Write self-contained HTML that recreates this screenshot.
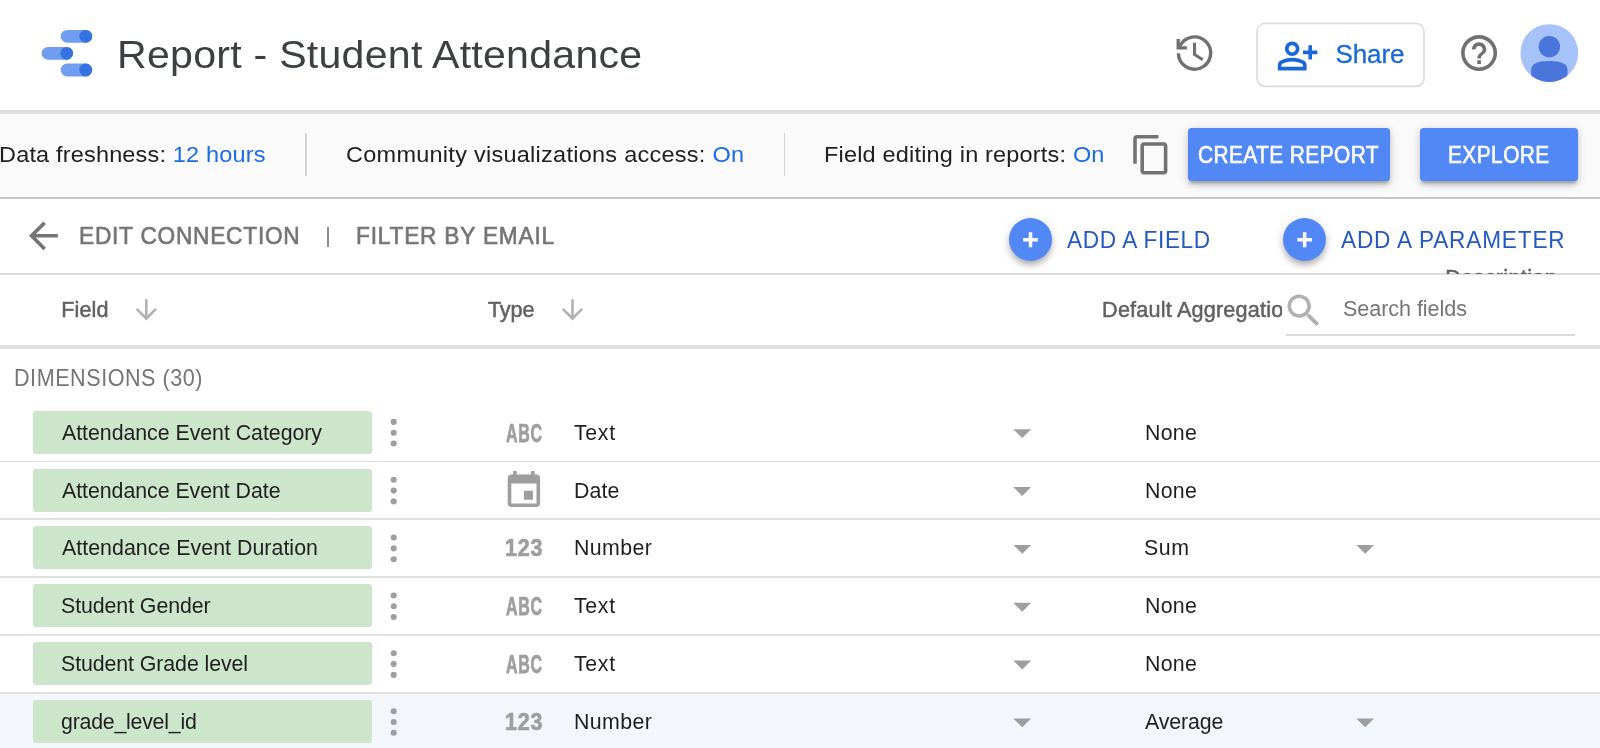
<!DOCTYPE html>
<html lang="en">
<head>
<meta charset="utf-8">
<title>Report - Student Attendance</title>
<style>
html,body{margin:0;padding:0;background:#fff}
body{width:1600px;height:748px;position:relative;overflow:hidden;font-family:"Liberation Sans",sans-serif}
.t{position:absolute;white-space:nowrap;line-height:1}
.t .b{color:#1a6ce5}
.a{position:absolute}
svg{position:absolute;left:0;top:0;overflow:visible}
.btn{position:absolute;background:#5188f6;border-radius:3.5px;box-shadow:0 4.5px 3px -2.5px rgba(0,0,0,.2),0 3.5px 5px rgba(0,0,0,.13),0 2.5px 11px rgba(0,0,0,.15)}
.fab{position:absolute;width:43.2px;height:43.2px;border-radius:50%;background:#5188f6;box-shadow:0 4.5px 6px -1.6px rgba(0,0,0,.2),0 4px 9px rgba(0,0,0,.14),0 1.6px 13px rgba(0,0,0,.10)}
.chip{position:absolute;left:32.6px;width:339.6px;height:43px;border-radius:3px;background:#cce5cb}
.sep{position:absolute;left:0;width:1600px;height:1.8px;background:#e0e0e0}
.ti{position:absolute;white-space:nowrap;line-height:1;font-weight:700;color:#9e9e9e;transform-origin:0 0;-webkit-text-stroke:.6px #9e9e9e}
</style>
</head>
<body>
<div id="root" style="position:absolute;left:0;top:0;width:1600px;height:748px;will-change:transform">
<!-- header -->
<div class="a" style="left:0;top:110.3px;width:1600px;height:1.8px;background:#dadce0"></div>
<div class="a" style="left:0;top:112.1px;width:1600px;height:1.8px;background:#e0e0e0"></div>
<!-- toolbar -->
<div class="a" style="left:0;top:113.9px;width:1600px;height:83.1px;background:#fafafa"></div>
<div class="a" style="left:0;top:197px;width:1600px;height:1.7px;background:#c6c6c6"></div>
<div class="a" style="left:305.2px;top:133px;width:1.6px;height:42.6px;background:#d4d4d4"></div>
<div class="a" style="left:783.8px;top:133px;width:1.6px;height:42.6px;background:#d4d4d4"></div>
<div class="btn" style="left:1187.7px;top:128.3px;width:202.7px;height:52.9px"></div>
<div class="btn" style="left:1419.6px;top:128.2px;width:158.5px;height:53px"></div>
<!-- sub header -->
<div class="a" style="left:327.3px;top:227px;width:1.5px;height:19.6px;background:#8c8c8c"></div>
<div class="fab" style="left:1008.7px;top:217.8px"></div>
<div class="fab" style="left:1282.8px;top:217.8px"></div>
<div class="a" style="left:0;top:273px;width:1600px;height:1.6px;background:#dcdcdc"></div>
<!-- column header -->
<div class="a" style="left:0;top:274.6px;width:1600px;height:70.5px;background:#fff"></div>
<div class="a" style="left:0;top:345.1px;width:1600px;height:3.6px;background:#e0e0e0"></div>
<div class="a" style="left:1430px;top:260px;width:160px;height:14.4px;overflow:hidden"><div class="t" style="left:15.2px;top:7.4px;font-size:21.6px;letter-spacing:.35px;color:#616161;-webkit-text-stroke:.5px #616161">Description</div></div>
<div class="a" style="left:1090px;top:290px;width:192px;height:40px;overflow:hidden"><div class="t" id="defagg" style="left:12.1px;top:9px;font-size:21.6px;letter-spacing:.2px;color:#616161;-webkit-text-stroke:.5px #616161">Default Aggregation</div></div>
<div class="a" style="left:1286px;top:334.2px;width:288.6px;height:1.6px;background:#d9d9d9"></div>
<!-- rows -->
<div class="a" style="left:0;top:693.7px;width:1600px;height:55px;background:#f3f6fa"></div>
<div class="chip" style="top:410.70px"></div>
<div class="sep" style="top:460.50px"></div>
<div class="ti" style="left:505.7px;top:420.50px;font-size:20px;transform:scale(0.8,1.25);letter-spacing:0.8px">ABC</div>
<div class="chip" style="top:468.55px"></div>
<div class="sep" style="top:518.35px"></div>
<div class="chip" style="top:526.40px"></div>
<div class="sep" style="top:576.20px"></div>
<div class="ti" style="left:504.6px;top:536.00px;font-size:20px;transform:scale(1.07,1.17);letter-spacing:0.8px">123</div>
<div class="chip" style="top:584.25px"></div>
<div class="sep" style="top:634.05px"></div>
<div class="ti" style="left:505.7px;top:594.05px;font-size:20px;transform:scale(0.8,1.25);letter-spacing:0.8px">ABC</div>
<div class="chip" style="top:642.10px"></div>
<div class="sep" style="top:691.90px"></div>
<div class="ti" style="left:505.7px;top:651.90px;font-size:20px;transform:scale(0.8,1.25);letter-spacing:0.8px">ABC</div>
<div class="chip" style="top:699.95px"></div>
<div class="ti" style="left:504.6px;top:709.55px;font-size:20px;transform:scale(1.07,1.17);letter-spacing:0.8px">123</div>
<svg width="1600" height="748" viewBox="0 0 1600 748">
<!-- logo -->
<g>
<rect x="60.7" y="29.9" width="31.5" height="12.8" rx="6.4" fill="#709df0"/><circle cx="85.8" cy="36.3" r="6.4" fill="#3572e2"/>
<rect x="41.7" y="47" width="31.3" height="12.7" rx="6.35" fill="#709df0"/><circle cx="66.65" cy="53.35" r="6.35" fill="#3572e2"/>
<rect x="60.7" y="63.6" width="31.5" height="12.9" rx="6.45" fill="#709df0"/><circle cx="85.75" cy="70.05" r="6.45" fill="#3572e2"/>
</g>
<!-- history -->
<g fill="none" stroke="#707070" stroke-width="3.4">
<path d="M1178.40 53.25A16.15 16.15 0 1 0 1179.91 46.22"/>
<path d="M1178.2 39.1V47.85H1186.9" stroke-width="3.3"/>
<path d="M1194.5 42.8V54.4L1202.7 59.8" stroke-width="3"/>
</g>
<!-- share button -->
<rect x="1257" y="23.4" width="167" height="62.9" rx="8" fill="#fff" stroke="#dadce0" stroke-width="1.7"/>
<g transform="translate(1276 34.4) scale(1.8)" fill="#1a68d8"><path d="M20 9V6h-2v3h-3v2h3v3h2v-3h3V9h-3zM9 12c2.21 0 4-1.79 4-4s-1.79-4-4-4-4 1.79-4 4 1.79 4 4 4zm0-6c1.1 0 2 .9 2 2s-.9 2-2 2-2-.9-2-2 .9-2 2-2zm6.390 8.560C13.710 13.700 11.530 13 9 13s-4.710.7-6.390 1.560C1.610 15.070 1 16.100 1 17.220V20h16v-2.780c0-1.120-.610-2.150-1.610-2.660zM15 18H3v-.78c0-.38.2-.72.520-.88C4.710 15.730 6.630 15 9 15c2.370 0 4.290.73 5.480 1.340.32.160.52.5.52.88V18z"/></g>
<!-- help -->
<g transform="translate(1457.5 31.5) scale(1.8)" fill="#717171"><path d="M11 18h2v-2h-2v2zm1-16C6.480 2 2 6.480 2 12s4.480 10 10 10 10-4.480 10-10S17.520 2 12 2zm0 18c-4.410 0-8-3.590-8-8s3.590-8 8-8 8 3.590 8 8-3.590 8-8 8zm0-14c-2.210 0-4 1.790-4 4h2c0-1.100.9-2 2-2s2 .9 2 2c0 2-3 1.750-3 5h2c0-2.250 3-2.500 3-5 0-2.210-1.790-4-4-4z"/></g>
<!-- avatar -->
<clipPath id="av"><circle cx="1549.35" cy="53.05" r="28.9"/></clipPath>
<circle cx="1549.35" cy="53.05" r="28.9" fill="#a5c3f9"/>
<g clip-path="url(#av)" fill="#4a76dc"><circle cx="1549.35" cy="46.6" r="10.7"/><path d="M1531.200 90V70C1531.200 64 1537 61.100 1549.350 61.100S1567.500 64 1567.500 70V90z"/></g>
<!-- copy icon -->
<g transform="translate(1129.6 133.2) scale(1.8)" fill="#737373"><path d="M16 1H4c-1.100 0-2 .9-2 2v14h2V3h12V1zm3 4H8c-1.100 0-2 .9-2 2v14c0 1.100.9 2 2 2h11c1.100 0 2-.9 2-2V7c0-1.100-.9-2-2-2zm0 16H8V7h11v14z"/></g>
<!-- back arrow -->
<g transform="translate(21.8 214.2) scale(1.8)" fill="#757575"><path d="M20 11H7.830l5.590-5.590L12 4l-8 8 8 8 1.410-1.410L7.830 13H20v-2z"/></g>
<!-- fab plus -->
<g stroke="#fff" stroke-width="3.5" fill="none"><path d="M1023.2 239.7h14.6M1030.500 232.300v14.900"/><path d="M1297.350 239.700h14.600M1304.650 232.300v14.900"/></g>
<!-- sort arrows -->
<g fill="#b3b3b3"><path transform="translate(130.3 293.8) scale(1.333)" d="M20 12l-1.410-1.410L13 16.170V4h-2v12.170l-5.580-5.590L4 12l8 8 8-8z"/><path transform="translate(556.5 293.800) scale(1.333)" d="M20 12l-1.410-1.410L13 16.170V4h-2v12.170l-5.580-5.590L4 12l8 8 8-8z"/></g>
<!-- search icon -->
<g transform="translate(1282.1 289) scale(1.8)" fill="#b0b0b0"><path d="M15.500 14h-.79l-.28-.27C15.410 12.590 16 11.110 16 9.500 16 5.910 13.090 3 9.500 3S3 5.910 3 9.500 5.910 16 9.500 16c1.610 0 3.090-.59 4.230-1.570l.27.28v.79l5 4.990L20.490 19l-4.990-5zm-6 0C7.010 14 5 11.990 5 9.500S7.010 5 9.500 5 14 7.010 14 9.500 11.990 14 9.500 14z"/></g>
<g fill="#9e9e9e"><circle cx="393.7" cy="421.9" r="3.05"/><circle cx="393.7" cy="432.7" r="3.05"/><circle cx="393.7" cy="443.5" r="3.05"/></g>
<path d="M1013.3 429.20H1031.2L1022.25 438.10z" fill="#9e9e9e"/>
<g fill="#9e9e9e"><circle cx="393.7" cy="479.8" r="3.05"/><circle cx="393.7" cy="490.6" r="3.05"/><circle cx="393.7" cy="501.4" r="3.05"/></g>
<g transform="translate(502.3 469.20) scale(1.8)" fill="#9e9e9e"><path d="M17 12h-5v5h5v-5zM16 1v2H8V1H6v2H5c-1.110 0-1.990.9-1.990 2L3 19c0 1.100.89 2 2 2h14c1.100 0 2-.9 2-2V5c0-1.100-.9-2-2-2h-1V1h-2zm3 18H5V8h14v11z"/></g>
<path d="M1013.3 487.05H1031.2L1022.25 495.95z" fill="#9e9e9e"/>
<g fill="#9e9e9e"><circle cx="393.7" cy="537.6" r="3.05"/><circle cx="393.7" cy="548.4" r="3.05"/><circle cx="393.7" cy="559.2" r="3.05"/></g>
<path d="M1013.3 544.90H1031.2L1022.25 553.80z" fill="#9e9e9e"/>
<path d="M1356.3 544.90H1374.1L1365.20 553.80z" fill="#9e9e9e"/>
<g fill="#9e9e9e"><circle cx="393.7" cy="595.5" r="3.05"/><circle cx="393.7" cy="606.2" r="3.05"/><circle cx="393.7" cy="617.0" r="3.05"/></g>
<path d="M1013.3 602.75H1031.2L1022.25 611.65z" fill="#9e9e9e"/>
<g fill="#9e9e9e"><circle cx="393.7" cy="653.3" r="3.05"/><circle cx="393.7" cy="664.1" r="3.05"/><circle cx="393.7" cy="674.9" r="3.05"/></g>
<path d="M1013.3 660.60H1031.2L1022.25 669.50z" fill="#9e9e9e"/>
<g fill="#9e9e9e"><circle cx="393.7" cy="711.2" r="3.05"/><circle cx="393.7" cy="722.0" r="3.05"/><circle cx="393.7" cy="732.8" r="3.05"/></g>
<path d="M1013.3 718.45H1031.2L1022.25 727.35z" fill="#9e9e9e"/>
<path d="M1356.3 718.45H1374.1L1365.20 727.35z" fill="#9e9e9e"/>
</svg>
<div class="t" style="left:116.97px;top:35.40px;font-size:39.5px;letter-spacing:0.250px;color:#3c4043;transform:scaleX(1.04);transform-origin:0 0;">Report - Student Attendance</div>
<div class="t" style="left:-0.97px;top:142.81px;font-size:22.8px;letter-spacing:0.175px;color:#212121;transform:scaleX(1.03);transform-origin:0 0;">Data freshness: <span class="b">12 hours</span></div>
<div class="t" style="left:346.44px;top:142.81px;font-size:22.8px;letter-spacing:0.262px;color:#212121;transform:scaleX(1.03);transform-origin:0 0;">Community visualizations access: <span class="b">On</span></div>
<div class="t" style="left:824.18px;top:142.81px;font-size:22.8px;letter-spacing:0.180px;color:#212121;transform:scaleX(1.03);transform-origin:0 0;">Field editing in reports: <span class="b">On</span></div>
<div class="t" style="left:1198.20px;top:143.60px;font-size:23.2px;letter-spacing:0.469px;color:#fff;-webkit-text-stroke:0.6px #fff;transform:scaleX(0.9);transform-origin:0 0;">CREATE REPORT</div>
<div class="t" style="left:1447.86px;top:143.60px;font-size:23.2px;letter-spacing:0.492px;color:#fff;-webkit-text-stroke:0.6px #fff;transform:scaleX(0.9);transform-origin:0 0;">EXPLORE</div>
<div class="t" style="left:1335.44px;top:41.11px;font-size:26.0px;letter-spacing:-0.101px;color:#1a68d8;-webkit-text-stroke:0.3px #1a68d8;">Share</div>
<div class="t" style="left:79.05px;top:223.60px;font-size:24.4px;letter-spacing:0.821px;color:#757575;-webkit-text-stroke:0.65px #757575;transform:scaleX(0.93);transform-origin:0 0;">EDIT CONNECTION</div>
<div class="t" style="left:356.05px;top:223.60px;font-size:24.4px;letter-spacing:0.862px;color:#757575;-webkit-text-stroke:0.65px #757575;transform:scaleX(0.93);transform-origin:0 0;">FILTER BY EMAIL</div>
<div class="t" style="left:1066.78px;top:228.40px;font-size:24.6px;letter-spacing:0.658px;color:#2459c3;transform:scaleX(0.92);transform-origin:0 0;">ADD A FIELD</div>
<div class="t" style="left:1340.92px;top:228.40px;font-size:24.6px;letter-spacing:0.900px;color:#2459c3;transform:scaleX(0.92);transform-origin:0 0;">ADD A PARAMETER</div>
<div class="t" style="left:61.25px;top:299.00px;font-size:21.6px;letter-spacing:0.089px;color:#616161;-webkit-text-stroke:0.5px #616161;">Field</div>
<div class="t" style="left:487.92px;top:299.00px;font-size:21.6px;letter-spacing:-0.040px;color:#616161;-webkit-text-stroke:0.5px #616161;">Type</div>
<div class="t" style="left:1342.94px;top:298.00px;font-size:21.6px;letter-spacing:-0.062px;color:#757575;">Search fields</div>
<div class="t" style="left:13.70px;top:366.60px;font-size:23.2px;letter-spacing:0.584px;color:#757575;transform:scaleX(0.93);transform-origin:0 0;">DIMENSIONS (30)</div>
<div class="t" style="left:61.66px;top:421.71px;font-size:21.9px;letter-spacing:-0.042px;color:#1f1f1f;transform:scaleX(0.975);transform-origin:0 0;">Attendance Event Category</div>
<div class="t" style="left:574.15px;top:421.71px;font-size:21.9px;letter-spacing:0.661px;color:#1f1f1f;transform:scaleX(0.975);transform-origin:0 0;">Text</div>
<div class="t" style="left:1144.57px;top:421.71px;font-size:21.9px;letter-spacing:0.271px;color:#1f1f1f;transform:scaleX(0.975);transform-origin:0 0;">None</div>
<div class="t" style="left:61.54px;top:479.56px;font-size:21.9px;letter-spacing:-0.050px;color:#1f1f1f;transform:scaleX(0.975);transform-origin:0 0;">Attendance Event Date</div>
<div class="t" style="left:574.27px;top:479.56px;font-size:21.9px;letter-spacing:0.057px;color:#1f1f1f;transform:scaleX(0.975);transform-origin:0 0;">Date</div>
<div class="t" style="left:1144.57px;top:479.56px;font-size:21.9px;letter-spacing:0.271px;color:#1f1f1f;transform:scaleX(0.975);transform-origin:0 0;">None</div>
<div class="t" style="left:61.54px;top:537.41px;font-size:21.9px;letter-spacing:0.035px;color:#1f1f1f;transform:scaleX(0.975);transform-origin:0 0;">Attendance Event Duration</div>
<div class="t" style="left:574.19px;top:537.41px;font-size:21.9px;letter-spacing:0.381px;color:#1f1f1f;transform:scaleX(0.975);transform-origin:0 0;">Number</div>
<div class="t" style="left:1144.41px;top:537.41px;font-size:21.9px;letter-spacing:0.543px;color:#1f1f1f;transform:scaleX(0.975);transform-origin:0 0;">Sum</div>
<div class="t" style="left:60.73px;top:595.26px;font-size:21.9px;letter-spacing:-0.083px;color:#1f1f1f;transform:scaleX(0.975);transform-origin:0 0;">Student Gender</div>
<div class="t" style="left:574.15px;top:595.26px;font-size:21.9px;letter-spacing:0.661px;color:#1f1f1f;transform:scaleX(0.975);transform-origin:0 0;">Text</div>
<div class="t" style="left:1144.57px;top:595.26px;font-size:21.9px;letter-spacing:0.271px;color:#1f1f1f;transform:scaleX(0.975);transform-origin:0 0;">None</div>
<div class="t" style="left:60.73px;top:653.11px;font-size:21.9px;letter-spacing:-0.092px;color:#1f1f1f;transform:scaleX(0.975);transform-origin:0 0;">Student Grade level</div>
<div class="t" style="left:574.15px;top:653.11px;font-size:21.9px;letter-spacing:0.661px;color:#1f1f1f;transform:scaleX(0.975);transform-origin:0 0;">Text</div>
<div class="t" style="left:1144.57px;top:653.11px;font-size:21.9px;letter-spacing:0.271px;color:#1f1f1f;transform:scaleX(0.975);transform-origin:0 0;">None</div>
<div class="t" style="left:60.71px;top:710.96px;font-size:21.9px;letter-spacing:-0.242px;color:#1f1f1f;transform:scaleX(0.975);transform-origin:0 0;">grade_level_id</div>
<div class="t" style="left:574.19px;top:710.96px;font-size:21.9px;letter-spacing:0.381px;color:#1f1f1f;transform:scaleX(0.975);transform-origin:0 0;">Number</div>
<div class="t" style="left:1145.10px;top:710.96px;font-size:21.9px;letter-spacing:-0.145px;color:#1f1f1f;transform:scaleX(0.975);transform-origin:0 0;">Average</div>
</div>
</body>
</html>
